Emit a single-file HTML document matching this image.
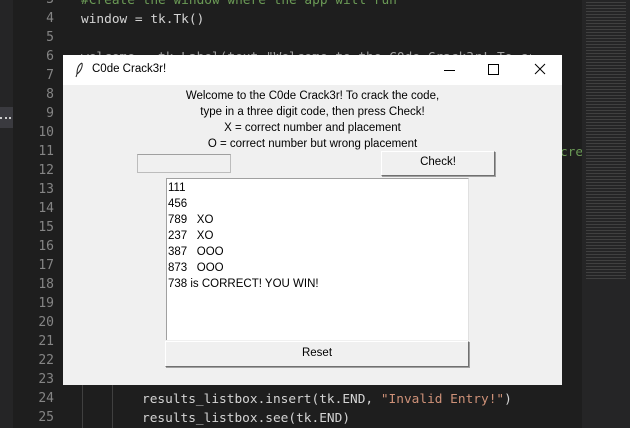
<!DOCTYPE html>
<html><head><style>
body{margin:0;width:630px;height:428px;background:#1e1e1e;position:relative;overflow:hidden;font-family:"DejaVu Sans Mono","Liberation Mono",monospace}
.ln{position:absolute;left:20px;width:34px;text-align:right;color:#858585;font-size:13px}
.clip{position:absolute;left:0;top:0;width:582px;height:428px;overflow:hidden}
.code{position:absolute;font-size:12.8px;line-height:15px;color:#d4d4d4;white-space:pre}
.win{position:absolute;left:63px;top:55px;width:499px;height:330px;background:#f0f0f0;font-family:"Liberation Sans",sans-serif;color:#000}
.tb{height:30px;background:#fff;position:relative}
.t{position:absolute;font-size:11.5px}
</style></head><body>
<div style="position:absolute;left:0;top:0;width:13px;height:428px;background:#252526"></div>
<div style="position:absolute;left:0;top:107px;width:13px;height:21px;background:#3a3a3f"></div>
<div style="position:absolute;left:0;top:117px;width:11px;border-top:2px dotted #ccc"></div>
<div style="position:absolute;left:582px;top:0;width:48px;height:428px;background:#252526"></div>
<div style="position:absolute;left:586px;top:0;width:40px;height:280px;background:repeating-linear-gradient(#252526 0 2px,#5a5a5a 2px 3px);opacity:.5"></div>
<div class="ln" style="top:-8px">3</div>
<div class="ln" style="top:11px">4</div>
<div class="ln" style="top:30px">5</div>
<div class="ln" style="top:49px">6</div>
<div class="ln" style="top:68px">7</div>
<div class="ln" style="top:87px">8</div>
<div class="ln" style="top:106px">9</div>
<div class="ln" style="top:125px">10</div>
<div class="ln" style="top:144px">11</div>
<div class="ln" style="top:163px">12</div>
<div class="ln" style="top:182px">13</div>
<div class="ln" style="top:201px">14</div>
<div class="ln" style="top:220px">15</div>
<div class="ln" style="top:239px">16</div>
<div class="ln" style="top:258px">17</div>
<div class="ln" style="top:277px">18</div>
<div class="ln" style="top:296px">19</div>
<div class="ln" style="top:315px">20</div>
<div class="ln" style="top:334px">21</div>
<div class="ln" style="top:353px">22</div>
<div class="ln" style="top:372px">23</div>
<div class="ln" style="top:391px">24</div>
<div class="ln" style="top:410px">25</div>
<div class="clip">
<div class="code" style="left:81px;top:-7px;color:#6a9955">#Create the window where the app will run</div>
<div class="code" style="left:81px;top:12px">window = tk.Tk()</div>
<div style="position:absolute;left:81px;top:0;width:450px;height:60px;overflow:hidden"><div class="code" style="left:0;top:50px;color:#a0a0a0">welcome = tk.Label(text="Welcome to the C0de Crack3r! To crack the code</div></div>
<div class="code" style="left:560px;top:145px;color:#6a9955">cre</div>
<div style="position:absolute;left:82px;top:380px;width:1px;height:48px;background:#404040"></div>
<div style="position:absolute;left:112px;top:380px;width:1px;height:48px;background:#404040"></div>
<div class="code" style="left:142px;top:392px">results_listbox.insert(tk.END, <span style="color:#ce9178">"Invalid Entry!"</span>)</div>
<div class="code" style="left:142px;top:411px">results_listbox.see(tk.END)</div>
</div>
<div class="win">
 <div class="tb">
  <svg style="position:absolute;left:11px;top:7px" width="10" height="16" viewBox="0 0 10 16"><path d="M8 1 C4 3 3 8 3 12 L2 15 M8 1 C9 5 6 10 3 12" stroke="#222" stroke-width="1" fill="#fff"/></svg>
  <div class="t" style="left:29px;top:8px">C0de Crack3r!</div>
  <div style="position:absolute;left:381px;top:15px;width:11px;border-top:1px solid #000"></div>
  <div style="position:absolute;left:425px;top:9px;width:9px;height:9px;border:1px solid #000"></div>
  <svg style="position:absolute;left:471px;top:8px" width="12" height="12"><path d="M1 1L11 11M11 1L1 11" stroke="#000" stroke-width="1"/></svg>
 </div>
 <div class="t" style="left:0;width:499px;text-align:center;top:33px;line-height:16px">Welcome to the C0de Crack3r! To crack the code,<br>type in a three digit code, then press Check!<br>X = correct number and placement<br>O = correct number but wrong placement</div>
 <div style="position:absolute;left:74px;top:99px;width:92px;height:17px;border:1px solid #bcbcbc;border-top-color:#a0a0a0;background:#f0f0f0"></div>
 <div style="position:absolute;left:318px;top:96px;width:112px;height:23px;background:#f0f0f0;border:1px solid;border-color:#fff #707070 #707070 #fff;box-shadow:1px 1px 0 #a0a0a0"><div class="t" style="width:112px;text-align:center;top:4px">Check!</div></div>
 <div style="position:absolute;left:103px;top:123px;width:301px;height:161px;background:#fff;border:1px solid #a0a0a0;border-right-color:#e0e0e0;border-bottom:none">
  <div class="t" style="left:1px;top:1px;line-height:16px;white-space:pre">111
456
789   XO
237   XO
387   OOO
873   OOO
738 is CORRECT! YOU WIN!</div>
 </div>
 <div style="position:absolute;left:102px;top:286px;width:302px;height:24px;background:#f0f0f0;border:1px solid;border-color:#fff #707070 #707070 #fff;box-shadow:1px 1px 0 #a0a0a0"><div class="t" style="width:302px;text-align:center;top:5px">Reset</div></div>
</div>
</body></html>
